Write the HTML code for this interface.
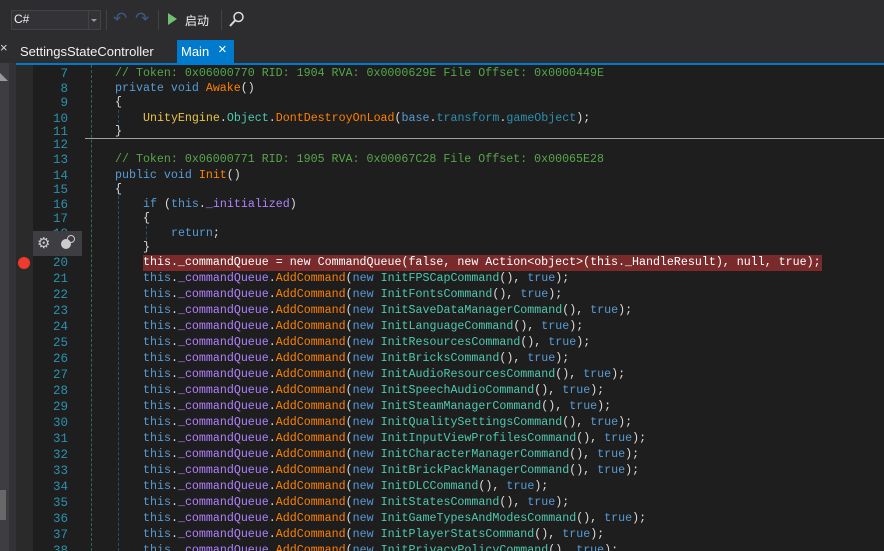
<!DOCTYPE html><html><head><meta charset="utf-8"><style>
html,body{margin:0;width:884px;height:551px;overflow:hidden}
body{background:#1e1e1e;position:relative;font-family:"Liberation Sans","Noto Sans CJK SC",sans-serif}
.a{position:absolute}
.code{font-family:"Liberation Mono",monospace;font-size:11.65px;white-space:pre;color:#dcdcdc;line-height:16px;height:16px}
.ln{color:#2b91af;text-align:right;width:40px;left:28px;font-size:12.5px}
.k{color:#569cd6}.c{color:#57a64a}.m{color:#ff8000}.t{color:#4ec9b0}.f{color:#b180ff}.y{color:#e8c547}.p{color:#2b91af}
</style></head><body>
<div class="a" style="left:0;top:0;width:884px;height:63px;background:#2d2d30"></div>
<div class="a" style="left:11px;top:10px;width:90px;height:20px;background:#333337;border:1px solid #434346;box-sizing:border-box"></div>
<div class="a" style="left:14px;top:12px;font-size:12px;color:#f1f1f1">C#</div>
<div class="a" style="left:88px;top:11px;width:12px;height:18px;border-left:1px solid #434346"></div>
<div class="a" style="left:91px;top:19px;border:3px solid transparent;border-top:3px solid #999"></div>
<div class="a" style="left:106px;top:10px;width:1px;height:20px;background:#434346"></div>
<div class="a" style="left:113px;top:9px;font-size:17px;color:#3d5a80">↶</div>
<div class="a" style="left:135px;top:9px;font-size:17px;color:#3d5a80">↷</div>
<div class="a" style="left:158px;top:10px;width:1px;height:20px;background:#434346"></div>
<div class="a" style="left:168px;top:13px;border:6px solid transparent;border-left:9px solid #6fc16f;border-right:0"></div>
<div class="a" style="left:185px;top:12px;font-size:12px;color:#f1f1f1">启动</div>
<div class="a" style="left:221px;top:10px;width:1px;height:20px;background:#434346"></div>
<svg class="a" style="left:228px;top:10px" width="18" height="18"><circle cx="10.5" cy="7" r="4.5" fill="none" stroke="#ddd" stroke-width="1.5"/><line x1="7.5" y1="10" x2="2" y2="16" stroke="#ddd" stroke-width="2"/></svg>
<div class="a" style="left:0;top:40px;font-size:13px;color:#ddd">×</div>
<div class="a" style="left:20px;top:44px;font-size:13px;color:#f1f1f1">SettingsStateController</div>
<div class="a" style="left:177px;top:40px;width:57px;height:23px;background:#007acc"></div>
<div class="a" style="left:181px;top:44px;font-size:13px;color:#fff">Main</div>
<div class="a" style="left:218px;top:41px;font-size:15px;color:#fff">×</div>
<div class="a" style="left:16px;top:63px;width:868px;height:2px;background:#007acc"></div>
<div class="a" style="left:0;top:63px;width:9px;height:488px;background:#3e3e42"></div>
<div class="a" style="left:0;top:490px;width:6px;height:30px;background:#686868"></div>
<div class="a" style="left:0;top:73px;border:4px solid transparent;border-bottom:4px solid #999;border-left:4px solid #999;width:0;height:0"></div>
<div class="a" style="left:9px;top:63px;width:7px;height:488px;background:#333337"></div>
<div class="a" style="left:16px;top:65px;width:17px;height:486px;background:#2a2a2a"></div>
<div class="a" style="left:91px;top:65px;height:486px;border-left:1px dashed #2d6b4a"></div>
<div class="a" style="left:118px;top:110px;height:18px;border-left:1px dashed #2d4d6b"></div>
<div class="a" style="left:118px;top:196px;height:360px;border-left:1px dashed #2d4d6b"></div>
<div class="a" style="left:146px;top:226px;height:14px;border-left:1px dashed #2d4d6b"></div>
<div class="a" style="left:85px;top:138px;width:799px;height:1px;background:#a0a0a0"></div>
<div class="a" style="left:143px;top:255px;width:679px;height:16px;background:#7a2a2a"></div>
<div class="a" style="left:18px;top:257px;width:12px;height:12px;border-radius:50%;background:#f03a2e"></div>
<div id="c"></div>
<div class="a" style="left:33px;top:231px;width:49px;height:25px;background:#3e3e42"></div>
<div class="a" style="left:37px;top:234px;font-size:15px;color:#ccc">⚙</div>
<div class="a" style="left:61px;top:239px;width:10px;height:10px;border-radius:50%;background:#ccc"></div>
<div class="a" style="left:67px;top:235px;width:6px;height:6px;border-radius:50%;border:1.5px solid #ccc"></div>
<script>
const rows=[
[7,1,'<span class="c">// Token: 0x06000770 RID: 1904 RVA: 0x0000629E File Offset: 0x0000449E</span>'],
[8,1,'<span class="k">private void</span> <span class="m">Awake</span>()'],
[9,1,'{'],
[10,2,'<span class="y">UnityEngine</span>.<span class="t">Object</span>.<span class="m">DontDestroyOnLoad</span>(<span class="k">base</span>.<span class="p">transform</span>.<span class="p">gameObject</span>);'],
[11,1,'}'],[12,1,''],
[13,1,'<span class="c">// Token: 0x06000771 RID: 1905 RVA: 0x00067C28 File Offset: 0x00065E28</span>'],
[14,1,'<span class="k">public void</span> <span class="m">Init</span>()'],
[15,1,'{'],
[16,2,'<span class="k">if</span> (<span class="k">this</span>.<span class="f">_initialized</span>)'],
[17,2,'{'],[18,3,'<span class="k">return</span>;'],[19,2,'}'],
[20,2,'<span style="color:#fff">this._commandQueue = new CommandQueue(false, new Action&lt;object&gt;(this._HandleResult), null, true);</span>']];
const cmds=['InitFPSCapCommand','InitFontsCommand','InitSaveDataManagerCommand','InitLanguageCommand','InitResourcesCommand','InitBricksCommand','InitAudioResourcesCommand','InitSpeechAudioCommand','InitSteamManagerCommand','InitQualitySettingsCommand','InitInputViewProfilesCommand','InitCharacterManagerCommand','InitBrickPackManagerCommand','InitDLCCommand','InitStatesCommand','InitGameTypesAndModesCommand','InitPlayerStatsCommand','InitPrivacyPolicyCommand'];
cmds.forEach((c,i)=>rows.push([21+i,2,'<span class="k">this</span>.<span class="f">_commandQueue</span>.<span class="m">AddCommand</span>(<span class="k">new</span> <span class="t">'+c+'</span>(), <span class="k">true</span>);']));
const cen={7:73,8:88,9:102,10:118,11:131,12:144,13:159,14:175,15:189,16:204,17:218,18:233,19:247,20:262};
let h='';
rows.forEach(([n,ind,s])=>{const c=cen[n]||(262+(n-20)*16);const top=c-7;
h+=`<div class="a code ln" style="top:${top}px">${n}</div><div class="a code" style="top:${top}px;left:${87+ind*28}px">${s}</div>`;});
document.getElementById('c').innerHTML=h;
</script>
</body></html>
